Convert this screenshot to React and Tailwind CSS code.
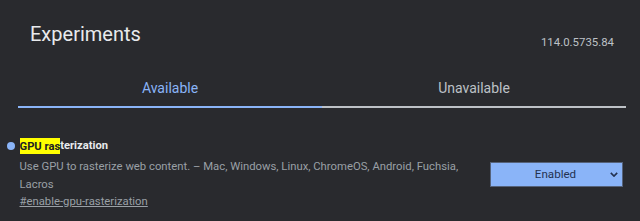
import React from 'react'

function Chevron() {
  return (
    <svg viewBox="0 0 10 6" className="h-[5px] w-[8px]" fill="none" stroke="currentColor" strokeWidth="2">
      <path d="M1 1l4 4 4-4" />
    </svg>
  )
}

export default function App() {
  return (
    <div className="h-[221px] w-[640px] overflow-hidden bg-[#292a2e] font-['Roboto',sans-serif]">
      <div className="flex h-[56px] justify-between">
        <h1 className="ml-[30px] mt-[20px] text-[20px] leading-[28px] text-[#e8eaed]">Experiments</h1>
        <span className="mr-[26px] mt-[34px] text-[11.4px] leading-[16px] text-[#bdc1c6]">114.0.5735.84</span>
      </div>

      <div className="ml-[18px] grid w-[608px] grid-cols-2">
        <div className="flex h-[52px] items-end justify-center border-b-2 border-[#8ab4f8] pb-[10px] text-[14px] leading-[16px] text-[#8ab4f8]">
          Available
        </div>
        <div className="flex h-[52px] items-end justify-center border-b-2 border-[#bdc1c6] pb-[10px] text-[14px] leading-[16px] text-[#bdc1c6]">
          Unavailable
        </div>
      </div>

      <div className="mt-[31px] flex items-center">
        <div className="flex pl-[7px]">
          <span className="mr-[5px] mt-[3px] h-[7.5px] w-[7.5px] shrink-0 rounded-full bg-[#8ab4f8]" />
          <div className="w-[455px]">
            <div className="text-[11.2px] font-bold leading-[14px] text-[#e8eaed]">
              <mark className="bg-[#ffff00] py-[1.5px] text-[#202124]">GPU ras</mark>terization
            </div>
            <p className="mt-[5px] text-[11.3px] leading-[17.5px] text-[#9aa0a6]">
              Use GPU to rasterize web content. – Mac, Windows, Linux, ChromeOS, Android, Fuchsia, Lacros
            </p>
            <a className="block text-[11.3px] leading-[17.5px] text-[#9aa0a6] underline">#enable-gpu-rasterization</a>
          </div>
        </div>
        <div className="ml-auto mr-[17px] flex h-[25px] w-[133px] items-center border border-[#55627a] bg-[#8ab4f8] pl-[10px] pr-[4px] text-[11.6px] text-[#243250]">
          <span className="flex-1 text-center">Enabled</span>
          <Chevron />
        </div>
      </div>
    </div>
  )
}
